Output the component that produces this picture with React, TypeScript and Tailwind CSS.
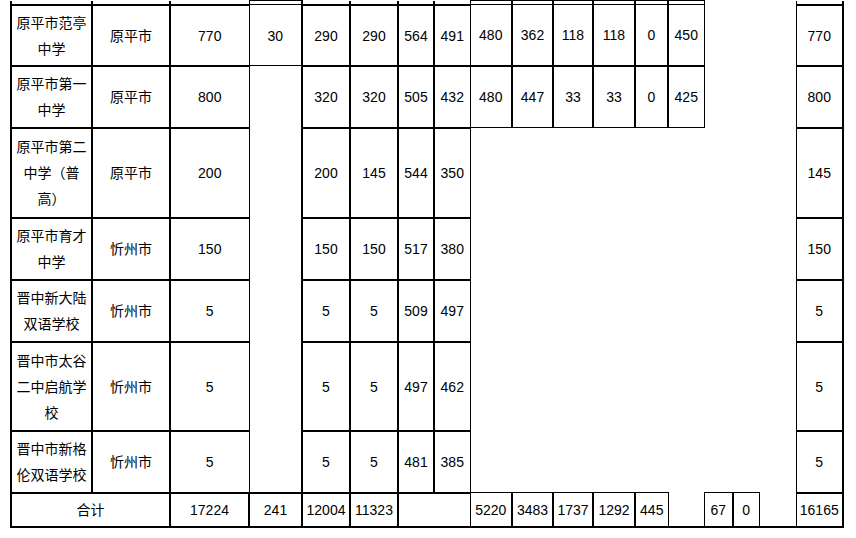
type Cell = { text?: string; cls: string; span?: number };

const widths = [81, 78, 79, 53, 48, 48, 36, 36, 42, 41, 40, 42, 33, 36, 29, 26, 37, 47];

const blank: Cell = { cls: "" };

// the three leading columns of a school row
function lead(name: string, city: string, plan: string): Cell[] {
  return [
    { text: name, cls: "border-l-2 border-r-2 border-b-2" },
    { text: city, cls: "border-r-2 border-b-2" },
    { text: plan, cls: "border-r border-b-2" },
  ];
}

function scores(a: string, b: string, c: string, d: string): Cell[] {
  return [
    { text: a, cls: "border-l-2 border-r-2 border-b-2" },
    { text: b, cls: "border-r-2 border-b-2" },
    { text: c, cls: "border-r-2 border-b-2" },
    { text: d, cls: "border-r border-b-2" },
  ];
}

function last(v: string): Cell {
  return { text: v, cls: "border-l border-r-2 border-b-2" };
}

function shortRow(name: string, city: string, plan: string, s: string[], end: string): Cell[] {
  return [
    ...lead(name, city, plan),
    blank,
    ...scores(s[0], s[1], s[2], s[3]),
    blank, blank, blank, blank, blank, blank,
    blank, blank, blank,
    last(end),
  ];
}

const rows: { h: string; cells: Cell[] }[] = [
  {
    h: "h-[4px]",
    cells: [
      { cls: "border-l-2 border-r-2 border-b-2" },
      { cls: "border-r-2 border-b-2" },
      { cls: "border-r border-b-2" },
      { cls: "border-t border-l border-b" },
      { cls: "border-l-2 border-r-2 border-b-2" },
      { cls: "border-r-2 border-b-2" },
      { cls: "border-r-2 border-b-2" },
      { cls: "border-r border-b-2" },
      { cls: "border-t border-b border-l" },
      { cls: "border-t border-b border-l-2" },
      { cls: "border-t border-b border-l-2" },
      { cls: "border-t border-b border-l-2" },
      { cls: "border-t border-b border-l-2" },
      { cls: "border-t border-b border-l-2 border-r" },
      blank, blank, blank,
      { cls: "border-l border-r-2 border-b-2" },
    ],
  },
  {
    h: "h-[61px]",
    cells: [
      ...lead("原平市范亭中学", "原平市", "770"),
      { text: "30", cls: "border-t border-b border-r" },
      ...scores("290", "290", "564", "491"),
      { text: "480", cls: "border-l border-b-2" },
      { text: "362", cls: "border-l-2 border-b-2" },
      { text: "118", cls: "border-l-2 border-b-2" },
      { text: "118", cls: "border-l-2 border-b-2" },
      { text: "0", cls: "border-l-2 border-b-2" },
      { text: "450", cls: "border-l-2 border-b-2 border-r" },
      blank, blank, blank,
      last("770"),
    ],
  },
  {
    h: "h-[62px]",
    cells: [
      ...lead("原平市第一中学", "原平市", "800"),
      blank,
      ...scores("320", "320", "505", "432"),
      { text: "480", cls: "border-l border-b" },
      { text: "447", cls: "border-l-2 border-b" },
      { text: "33", cls: "border-l-2 border-b" },
      { text: "33", cls: "border-l-2 border-b" },
      { text: "0", cls: "border-l-2 border-b" },
      { text: "425", cls: "border-l-2 border-b border-r" },
      blank, blank, blank,
      last("800"),
    ],
  },
  { h: "h-[90px]", cells: shortRow("原平市第二中学（普高）", "原平市", "200", ["200", "145", "544", "350"], "145") },
  { h: "h-[62px]", cells: shortRow("原平市育才中学", "忻州市", "150", ["150", "150", "517", "380"], "150") },
  { h: "h-[62px]", cells: shortRow("晋中新大陆双语学校", "忻州市", "5", ["5", "5", "509", "497"], "5") },
  { h: "h-[89px]", cells: shortRow("晋中市太谷二中启航学校", "忻州市", "5", ["5", "5", "497", "462"], "5") },
  { h: "h-[62px]", cells: shortRow("晋中市新格伦双语学校", "忻州市", "5", ["5", "5", "481", "385"], "5") },
  {
    h: "h-[34px]",
    cells: [
      { text: "合计", cls: "border-l-2 border-r-2 border-b-2", span: 2 },
      { text: "17224", cls: "border-r-2 border-b-2" },
      { text: "241", cls: "border-t-2 border-r-2 border-b-2" },
      { text: "12004", cls: "border-r-2 border-b-2" },
      { text: "11323", cls: "border-r-2 border-b-2" },
      { cls: "border-r border-b-2", span: 2 },
      { text: "5220", cls: "border-t border-l border-b-2" },
      { text: "3483", cls: "border-t border-l-2 border-b-2" },
      { text: "1737", cls: "border-t border-l-2 border-b-2" },
      { text: "1292", cls: "border-t border-l-2 border-b-2" },
      { text: "445", cls: "border-t border-l-2 border-r border-b-2" },
      { cls: "border-b-2" },
      { text: "67", cls: "border-t border-l border-r-2 border-b-2" },
      { text: "0", cls: "border-t border-r border-b-2" },
      { cls: "border-b-2" },
      { text: "16165", cls: "border-l border-t-2 border-r-2 border-b-2" },
    ],
  },
];

export default function App() {
  return (
    <div className="w-[856px] h-[538px] overflow-hidden bg-white pl-[10px]">
      <table className="w-[834px] table-fixed border-collapse text-[14px] leading-[26px] text-black [text-spacing-trim:space-all] font-['Liberation_Sans','Noto_Sans_CJK_SC',sans-serif]">
        <colgroup>
          {widths.map((w, i) => (
            <col key={i} style={{ width: w }} />
          ))}
        </colgroup>
        <tbody>
          {rows.map((row, ri) => (
            <tr key={ri} className={row.h}>
              {row.cells.map((c, ci) => (
                <td
                  key={ci}
                  colSpan={c.span}
                  className={`border-black p-0 pt-px text-center align-middle ${c.cls}`}
                >
                  {c.text}
                </td>
              ))}
            </tr>
          ))}
        </tbody>
      </table>
    </div>
  );
}
